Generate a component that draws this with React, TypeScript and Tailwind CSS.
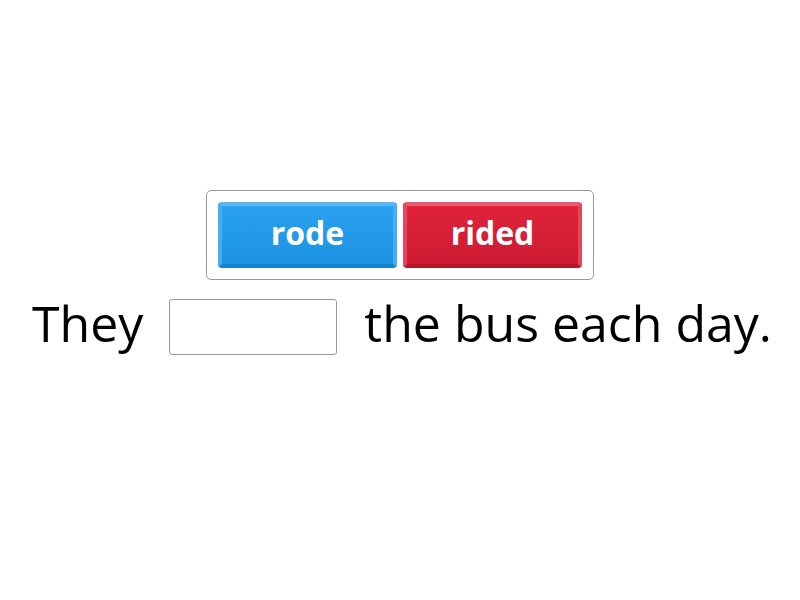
const OPTIONS = [
  { label: "rode", tone: "blue" },
  { label: "rided", tone: "red" },
];

function OptionTile({ label, tone }: { label: string; tone: string }) {
  const cls =
    tone === "blue"
      ? "bg-gradient-to-b from-[#2ba2f0] to-[#1a91e2] border-t-[#5cb9f6] border-x-[#46adf3] border-b-[#1583cc]"
      : "bg-gradient-to-b from-[#e0233a] to-[#cc1b31] border-t-[#ea5a6c] border-x-[#e4475b] border-b-[#b3172a]";
  return (
    <div
      className={`w-[179px] h-[66px] rounded-[4px] border-[4px] border-solid flex items-center justify-center text-white font-bold text-[32px] leading-none pb-1 ${cls}`}
    >
      {label}
    </div>
  );
}

export default function App() {
  return (
    <div
      className="w-[800px] h-[600px] bg-white flex flex-col items-center"
      style={{ fontFamily: '"Open Sans", sans-serif' }}
    >
      <div className="mt-[190px] w-[388px] h-[90px] border border-[#9a9a9a] rounded-[5px] flex items-center justify-center gap-[6px]">
        {OPTIONS.map((o) => (
          <OptionTile key={o.label} label={o.label} tone={o.tone} />
        ))}
      </div>

      <div className="w-full flex items-center pl-[32px] mt-[11px] text-[50px] text-black leading-none">
        <span>They</span>
        <div className="ml-[26px] mr-[27px] w-[168px] h-[56px] border border-[#9a9a9a] rounded-[3px] mt-[8px]" />
        <span>the bus each day.</span>
      </div>
    </div>
  );
}
